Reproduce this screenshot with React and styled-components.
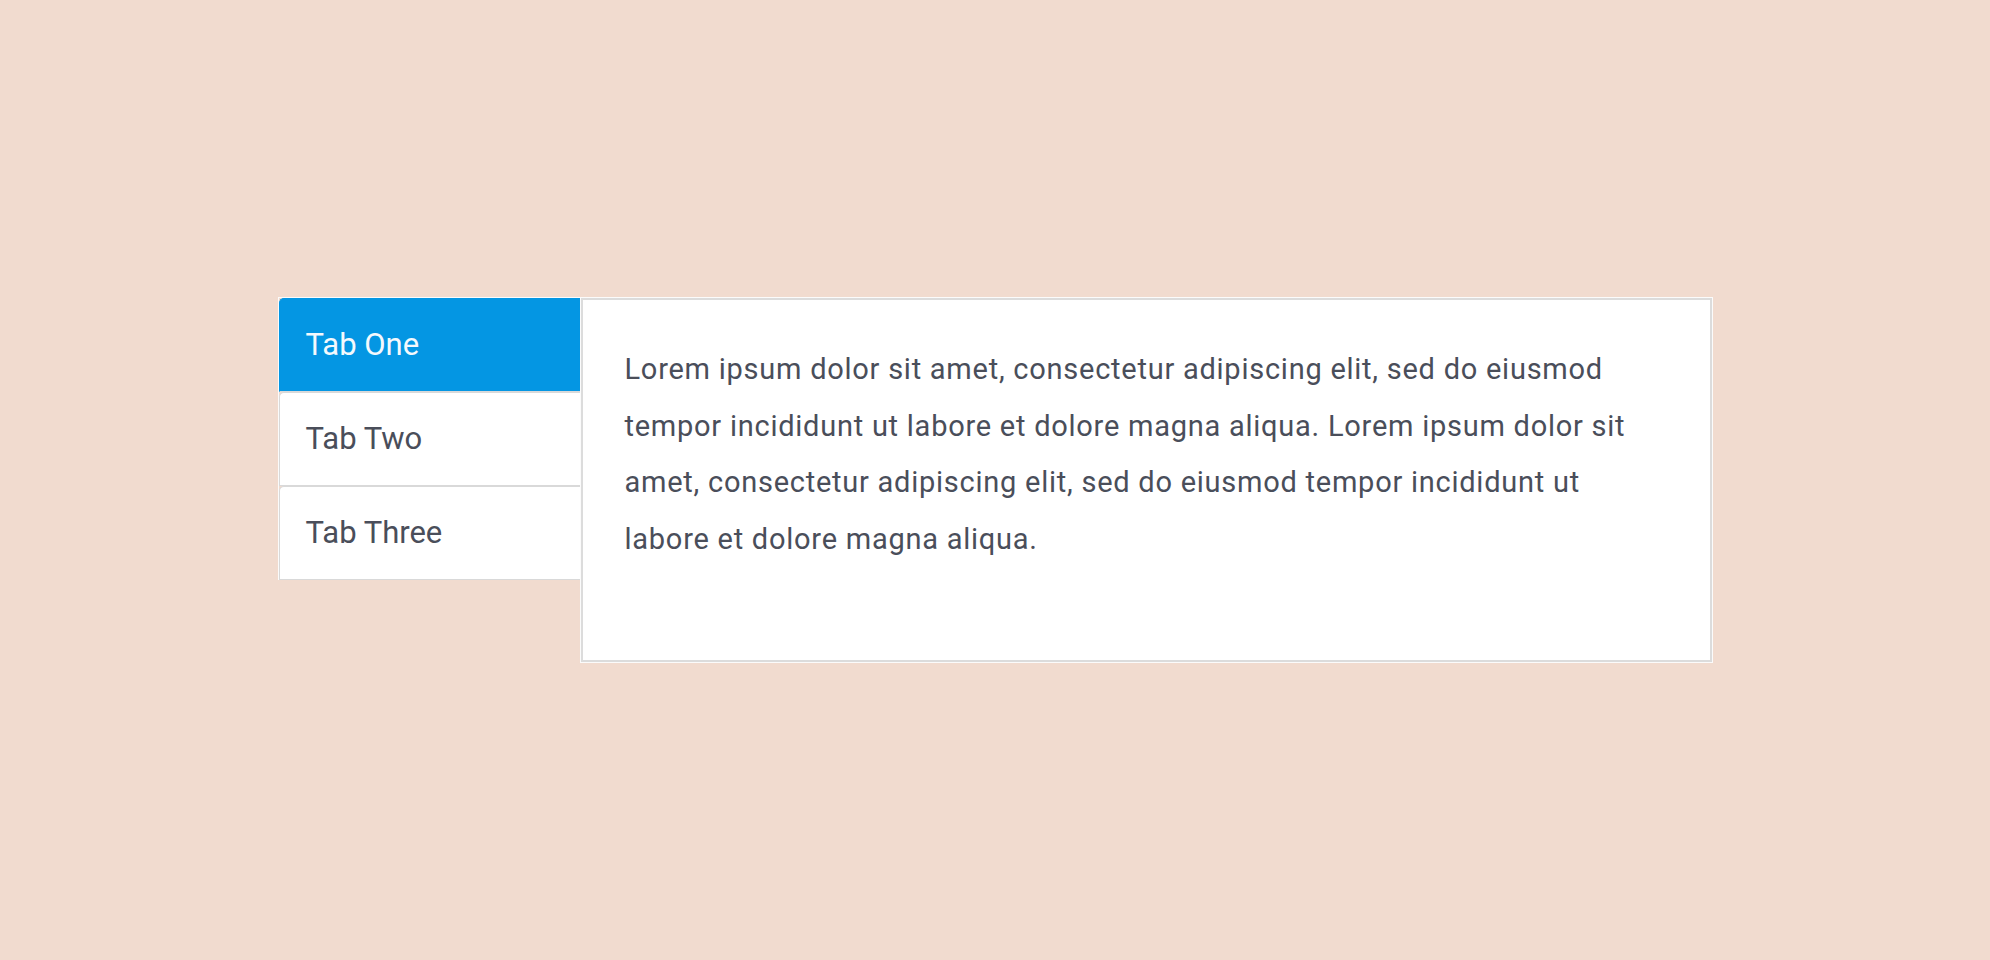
import React from 'react';
import styled, { createGlobalStyle } from 'styled-components';

const { useState } = React;

const GlobalStyle = createGlobalStyle`
  * { box-sizing: border-box; }
  body {
    margin: 0;
    background: #f1dbcf;
    font-family: Roboto, "Noto Sans", sans-serif;
  }
`;

const Page = styled.div`
  height: 100vh;
  display: flex;
  align-items: center;
  justify-content: center;
`;

const TabsWrap = styled.div`
  display: flex;
  align-items: flex-start;
`;

const TabList = styled.div`
  width: 302px;
  display: flex;
  flex-direction: column;
  border-top: 1px solid #fbfbfb;
  border-left: 1px solid #fbfbfb;
`;

const Tab = styled.button`
  height: 94px;
  display: flex;
  align-items: center;
  padding: 0 0 2px 26px;
  margin: 0;
  border: 1px solid ${(p) => (p.active ? '#0496e3' : '#d9d9d9')};
  border-bottom-color: #d9d9d9;
  border-right: none;
  border-top-left-radius: 5px;
  background: ${(p) => (p.active ? '#0496e3' : '#ffffff')};
  color: ${(p) => (p.active ? '#f4f9fd' : '#4a4e5a')};
  font-family: Roboto, "Noto Sans", sans-serif;
  font-size: 31px;
  text-align: left;
  cursor: pointer;
`;

const Panel = styled.div`
  width: 1133px;
  height: 366px;
  background: #ffffff;
  border: 1px solid #fbfbfb;
  box-shadow: inset 0 0 0 2px #dcdcdc;
  padding: 43px 44px 0 44px;
`;

const Text = styled.p`
  margin: 0;
  font-size: 29px;
  line-height: 56.6px;
  letter-spacing: 0.75px;
  color: #4a4e5a;
`;

const lorem =
  'Lorem ipsum dolor sit amet, consectetur adipiscing elit, sed do eiusmod tempor incididunt ut labore et dolore magna aliqua. Lorem ipsum dolor sit amet, consectetur adipiscing elit, sed do eiusmod tempor incididunt ut labore et dolore magna aliqua.';

const tabs = ['Tab One', 'Tab Two', 'Tab Three'];

export default function App() {
  const [current, setCurrent] = useState(0);

  return (
    <Page>
      <GlobalStyle />
      <TabsWrap>
        <TabList>
          {tabs.map((label, i) => (
            <Tab key={label} active={i === current} onClick={() => setCurrent(i)}>
              {label}
            </Tab>
          ))}
        </TabList>
        <Panel>
          <Text>{lorem}</Text>
        </Panel>
      </TabsWrap>
    </Page>
  );
}
